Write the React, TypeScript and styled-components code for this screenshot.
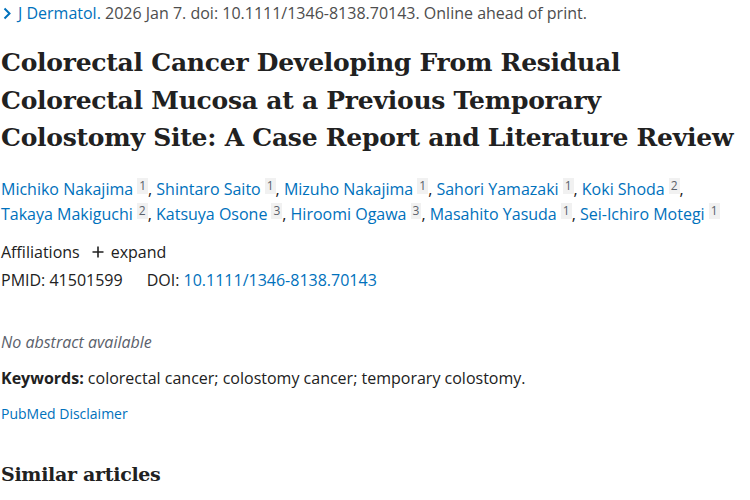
import React from "react";
import styled, { createGlobalStyle } from "styled-components";

const Global = createGlobalStyle`
  html, body { margin: 0; padding: 0; background: #fff; }
  body { font-family: "Open Sans", "Noto Sans", sans-serif; color: #212121; }
  * { box-sizing: border-box; }
`;

const Page = styled.div`
  width: 750px;
  height: 500px;
  overflow: hidden;
  padding: 0 0 0 1px;
  display: flex;
  flex-direction: column;
`;

const Citation = styled.div`
  display: flex;
  align-items: center;
  height: 26px;
  font-size: 16px;
  color: #4d4d4d;
  white-space: nowrap;
  gap: 7px;
  padding-left: 2px;
`;

const Link = styled.a`
  color: #0071bc;
  text-decoration: none;
`;

const Title = styled.h1`
  margin: 18px 0 0;
  font-family: "DejaVu Serif", serif;
  font-weight: bold;
  font-size: 25px;
  line-height: 37.5px;
  color: #212121;
  letter-spacing: -0.25px;
`;

const Authors = styled.div`
  margin-top: 20px;
  max-width: 725px;
  font-size: 16px;
  line-height: 25px;
  color: #212121;
`;

const Sup = styled.sup`
  display: inline-block;
  background: #f1f1f1;
  color: #5b616b;
  font-size: 12px;
  line-height: 16px;
  padding: 0 2px;
  margin-left: 4px;
  vertical-align: 5px;
`;

const MetaRow = styled.div<{ $mt?: number }>`
  display: flex;
  align-items: center;
  gap: 12px;
  margin-top: ${(p) => p.$mt ?? 0}px;
  font-size: 16px;
  line-height: 28px;
  color: #212121;
`;

const Expand = styled.span`
  display: inline-flex;
  align-items: center;
  gap: 7px;
`;

const DoiGap = styled.span`
  width: 0px;
`;

const NoAbstract = styled.div`
  margin-top: 34px;
  font-size: 16px;
  font-style: italic;
  color: #5b616b;
  line-height: 28px;
`;

const Keywords = styled.div`
  margin-top: 8px;
  font-size: 16px;
  line-height: 28px;
  b { font-weight: 700; }
`;

const Disclaimer = styled.div`
  margin-top: 8px;
  font-size: 14px;
  line-height: 28px;
`;

const Similar = styled.h2`
  margin: 32px 0 0;
  font-family: "DejaVu Serif", serif;
  font-weight: bold;
  font-size: 19px;
  line-height: 28px;
  letter-spacing: -0.3px;
  color: #212121;
`;

const authors: [string, number][] = [
  ["Michiko Nakajima", 1],
  ["Shintaro Saito", 1],
  ["Mizuho Nakajima", 1],
  ["Sahori Yamazaki", 1],
  ["Koki Shoda", 2],
  ["Takaya Makiguchi", 2],
  ["Katsuya Osone", 3],
  ["Hiroomi Ogawa", 3],
  ["Masahito Yasuda", 1],
  ["Sei-Ichiro Motegi", 1],
];

export default function App() {
  return (
    <Page>
      <Global />
      <Citation>
        <svg width="8" height="13" viewBox="0 0 8 13">
          <path d="M1.5 1.5 L6.5 6.5 L1.5 11.5" fill="none" stroke="#0071bc" strokeWidth="2" />
        </svg>
        <span>
          <Link href="#">J Dermatol.</Link> 2026 Jan 7. doi: 10.1111/1346-8138.70143. Online ahead of print.
        </span>
      </Citation>
      <Title>
        Colorectal Cancer Developing From Residual Colorectal Mucosa at a Previous Temporary Colostomy Site: A Case Report and Literature Review
      </Title>
      <Authors>
        {authors.map(([n, s], i) => (
          <React.Fragment key={n}>
            <Link href="#">{n}</Link>
            <Sup>{s}</Sup>
            {i < authors.length - 1 ? ", " : ""}
          </React.Fragment>
        ))}
      </Authors>
      <MetaRow $mt={11}>
        <span>Affiliations</span>
        <Expand>
          <svg width="12" height="12" viewBox="0 0 12 12">
            <path d="M6 0.5 V11.5 M0.5 6 H11.5" stroke="#212121" strokeWidth="1.6" />
          </svg>
          expand
        </Expand>
      </MetaRow>
      <MetaRow>
        <span>PMID: 41501599</span>
        <DoiGap />
        <span>
          DOI: <Link href="#">10.1111/1346-8138.70143</Link>
        </span>
      </MetaRow>
      <NoAbstract>No abstract available</NoAbstract>
      <Keywords>
        <b>Keywords:</b> colorectal cancer; colostomy cancer; temporary colostomy.
      </Keywords>
      <Disclaimer>
        <Link href="#">PubMed Disclaimer</Link>
      </Disclaimer>
      <Similar>Similar articles</Similar>
    </Page>
  );
}
